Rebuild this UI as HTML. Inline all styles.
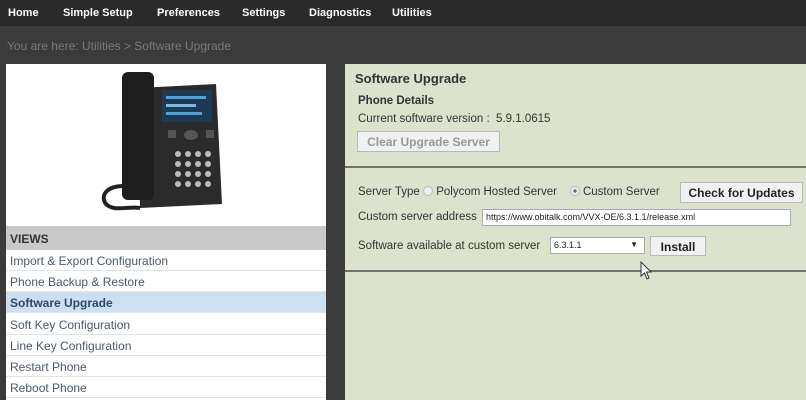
<!DOCTYPE html>
<html><head><meta charset="utf-8"><style>
*{margin:0;padding:0;box-sizing:border-box}
body{width:806px;height:400px;overflow:hidden;background:#3b3b3b;font-family:"Liberation Sans","DejaVu Sans",sans-serif;font-size:12px;position:relative}
.nav{position:absolute;left:0;top:0;width:806px;height:26px;background:#2a2a2a;color:#fff;font-weight:bold;font-size:11px}
.nav span{position:absolute;top:7px}
.bc{position:absolute;left:7px;top:39px;color:#7a7a7a;font-size:12px}
.left{position:absolute;left:6px;top:64px;width:320px;height:336px;background:#fff}
.views{position:absolute;left:0;top:162px;width:320px;height:24px;background:#c9c9c9;font-weight:bold;color:#333;padding:6px 4px;font-size:12px}
.item{position:absolute;left:0;width:320px;height:21px;border-bottom:1px solid #e4e4e4;color:#4a5a6a;padding:4px 4px;font-size:12px}
.sel{background:#cde0f2;font-weight:bold;color:#2c4a66}
.right{position:absolute;left:345px;top:64px;width:461px;height:336px;background:#dce3cd;color:#333;font-size:11.5px}
.hr{position:absolute;left:0;width:461px;height:2px;background:#6e7268}
.t{position:absolute;white-space:nowrap}
.btn{position:absolute;background:#f1f1f1;border:1px solid #b9b9b9;font-weight:bold;text-align:center;font-size:12px}
.inp{position:absolute;background:#fff;border:1px solid #aaa;font-size:9px;padding:2px 3px;color:#222}
</style></head><body>
<div class="nav">
<span style="left:8px">Home</span><span style="left:63px">Simple Setup</span><span style="left:157px">Preferences</span><span style="left:242px">Settings</span><span style="left:309px">Diagnostics</span><span style="left:392px">Utilities</span>
</div>
<div class="bc">You are here: Utilities &gt; Software Upgrade</div>
<div class="left">
<svg style="position:absolute;left:92px;top:4px" width="130" height="145" viewBox="0 0 130 145">
<path d="M40 20 L118 16 L124 136 L42 140 Z" fill="#2b2b2b"/>
<rect x="24" y="4" width="32" height="128" rx="6" fill="#1e1e1e"/>
<rect x="64" y="22" width="50" height="32" fill="#1d3a55"/>
<rect x="68" y="28" width="40" height="3" fill="#4fa3d9"/>
<rect x="68" y="36" width="30" height="3" fill="#7bbbe0"/>
<rect x="68" y="44" width="36" height="3" fill="#4fa3d9"/>
<ellipse cx="93" cy="67" rx="7" ry="5" fill="#555"/>
<rect x="70" y="62" width="8" height="8" fill="#555"/><rect x="108" y="62" width="8" height="8" fill="#555"/>
<g fill="#bbb"><circle cx="80" cy="86" r="3"/><circle cx="90" cy="86" r="3"/><circle cx="100" cy="86" r="3"/><circle cx="110" cy="86" r="3"/><circle cx="80" cy="96" r="3"/><circle cx="90" cy="96" r="3"/><circle cx="100" cy="96" r="3"/><circle cx="110" cy="96" r="3"/><circle cx="80" cy="106" r="3"/><circle cx="90" cy="106" r="3"/><circle cx="100" cy="106" r="3"/><circle cx="110" cy="106" r="3"/><circle cx="80" cy="116" r="3"/><circle cx="90" cy="116" r="3"/><circle cx="100" cy="116" r="3"/><circle cx="110" cy="116" r="3"/></g>
<path d="M26 118 C8 118 2 128 8 136 C16 144 30 138 42 140" stroke="#222" stroke-width="4" fill="none"/>
</svg>
<div class="views">VIEWS</div>
<div class="item" style="top:186px">Import &amp; Export Configuration</div>
<div class="item" style="top:207px">Phone Backup &amp; Restore</div>
<div class="item sel" style="top:228px">Software Upgrade</div>
<div class="item" style="top:250px">Soft Key Configuration</div>
<div class="item" style="top:271px">Line Key Configuration</div>
<div class="item" style="top:292px">Restart Phone</div>
<div class="item" style="top:313px">Reboot Phone</div>
</div>
<div class="right">
<div class="t" style="left:10px;top:7px;font-size:13px;font-weight:bold">Software Upgrade</div>
<div class="t" style="left:13px;top:31px;font-weight:bold">Phone Details</div>
<div class="t" style="left:13px;top:49px">Current software version :&nbsp; 5.9.1.0615</div>
<div class="btn" style="left:12px;top:67px;width:143px;height:21px;color:#999;padding-top:3px">Clear Upgrade Server</div>
<div class="hr" style="top:102px"></div>
<div class="t" style="left:13px;top:122px">Server Type <span style="display:inline-block;width:10px;height:10px;border:1px solid #bbb;border-radius:50%;background:#eee;vertical-align:-1px"></span> Polycom Hosted Server &nbsp;&nbsp; <span style="display:inline-block;width:10px;height:10px;border:1px solid #bbb;border-radius:50%;background:radial-gradient(#666 25%,#eee 35%);vertical-align:-1px"></span> Custom Server</div>
<div class="btn" style="left:335px;top:118px;width:123px;height:21px;padding-top:3px;color:#222">Check for Updates</div>
<div class="t" style="left:13px;top:147px">Custom server address</div>
<div class="inp" style="left:137px;top:145px;width:309px;height:17px">https://www.obitalk.com/VVX-OE/6.3.1.1/release.xml</div>
<div class="t" style="left:13px;top:176px">Software available at custom server</div>
<div class="inp" style="left:205px;top:173px;width:95px;height:17px">6.3.1.1<span style="position:absolute;right:6px;top:2px;font-size:8px">▼</span></div>
<div class="btn" style="left:305px;top:172px;width:56px;height:20px;padding-top:3px;color:#222">Install</div>
<div class="hr" style="top:206px"></div>
<svg style="position:absolute;left:295px;top:197px" width="14" height="20" viewBox="0 0 14 20"><path d="M1 1 L1 15 L4.5 12 L7 18 L9 17 L6.5 11 L11 11 Z" fill="#fff" stroke="#333" stroke-width="1"/></svg>
</div>
</body></html>
